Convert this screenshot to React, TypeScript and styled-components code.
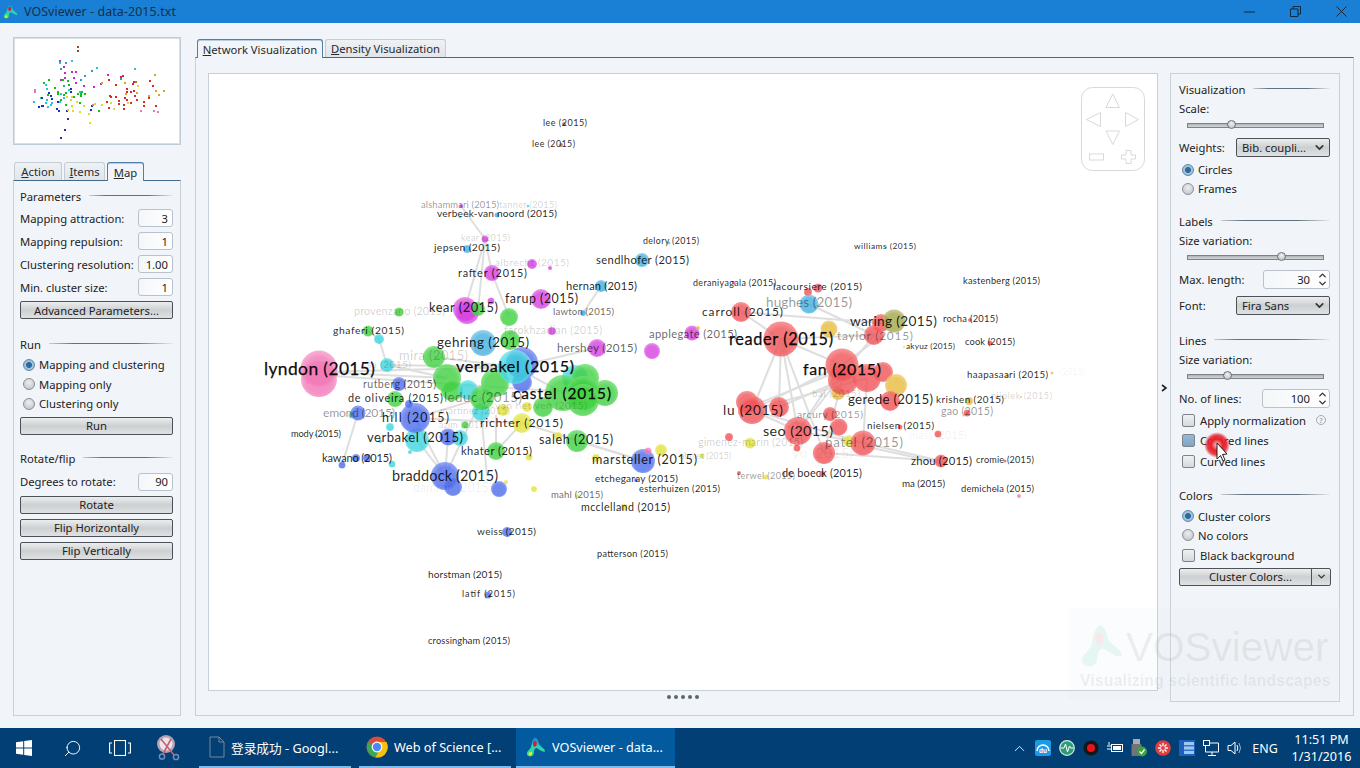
import React from "react";
import styled, { createGlobalStyle } from "styled-components";
import { ChevronDown, ChevronUp, Search } from "lucide-react";

const Global = createGlobalStyle`
  html, body { margin: 0; padding: 0; height: 100%; overflow: hidden; }
  #root { height: 100%; }
  * { box-sizing: border-box; }
`;

const UI_FONT = `"Noto Sans", "Noto Sans CJK SC", "Liberation Sans", sans-serif`;

/* ---------- data ---------- */
type Cluster = "red" | "green" | "blue" | "yellow" | "purple" | "cyan" | "sky" | "orange" | "pink" | "olive" | "brown";

const SHADES: Record<Cluster, [string, string, string]> = {
  red: ["#ef5256", "#f68a8c", "#d92a2a"],
  green: ["#3fd03f", "#7fe27f", "#12bf12"],
  blue: ["#4d6cec", "#8ba0f2", "#1c30bd"],
  yellow: ["#e2e23e", "#eeee90", "#dcdc28"],
  purple: ["#d640e0", "#e88cee", "#c928c9"],
  cyan: ["#3dd4dc", "#8ce8ec", "#22c8d8"],
  sky: ["#44aee0", "#8cd0ee", "#22a0d0"],
  orange: ["#e6bb3e", "#f0d488", "#d8a828"],
  pink: ["#f276b6", "#f8aad2", "#e878b0"],
  olive: ["#a2a648", "#c4c68c", "#908830"],
  brown: ["#c06a50", "#d09880", "#8a5030"],
};

const NODES: [number, number, number, Cluster][] = [
  [319, 379, 18, "pink"], [319, 369, 18.5, "pink"],
  [465, 309, 12, "purple"], [467, 312, 12, "purple"], [478, 309, 7, "green"], [491, 301, 3.5, "purple"], [492, 273, 8, "purple"],
  [541, 299, 10, "purple"], [532, 264, 5, "purple"], [550, 268, 2, "purple"], [485, 239, 3.5, "purple"], [461, 206, 2, "purple"],
  [552, 331, 4, "purple"], [597, 348, 9, "purple"], [652, 351, 8, "purple"], [692, 333, 7.5, "purple"], [698, 328, 2, "orange"],
  [467, 249, 4, "sky"], [528, 206, 1.5, "cyan"], [497, 215, 2.5, "sky"], [460, 217, 1.5, "cyan"], [642, 260, 7, "sky"], [601, 286, 6, "sky"],
  [583, 313, 3, "sky"], [483, 343, 13, "sky"],
  [510, 340, 10, "green"], [509, 317, 9, "green"], [434, 357, 11, "green"], [399, 312, 4.5, "green"], [368, 331, 5.5, "green"],
  [395, 399, 8, "green"], [447, 378, 14, "green"], [452, 390, 11, "green"], [495, 383, 14, "green"],
  [522, 382, 10, "blue"], [522, 363, 16, "blue"], [515, 367, 17, "cyan"],
  [379, 339, 5, "cyan"], [387, 365, 7, "cyan"], [352, 415, 3.5, "cyan"], [390, 427, 4, "cyan"], [468, 390, 10, "cyan"], [481, 412, 9, "cyan"],
  [482, 398, 12, "green"], [417, 440, 12, "cyan"], [460, 438, 8, "cyan"], [410, 452, 2, "cyan"], [380, 441, 2, "cyan"], [392, 464, 3.5, "cyan"], [316, 435, 1.5, "cyan"],
  [575, 378, 13, "cyan"], [585, 378, 14, "green"], [605, 393, 13, "green"], [563, 393, 18, "green"], [583, 393, 17, "green"], [583, 400, 16, "green"], [543, 407, 10, "green"],
  [577, 441, 11, "green"], [496, 451, 9, "green"], [465, 425, 3.5, "green"],
  [399, 384, 7, "blue"], [358, 413, 7.5, "blue"], [415, 418, 15, "blue"], [409, 404, 4, "blue"], [448, 437, 8.5, "blue"],
  [356, 458, 4, "blue"], [367, 458, 4, "blue"], [342, 465, 3.5, "blue"], [453, 487, 9, "blue"], [445, 476, 14, "blue"], [499, 489, 8, "blue"],
  [507, 532, 5, "blue"], [488, 595, 3.5, "blue"], [643, 461, 12, "blue"], [636, 480, 2, "blue"], [468, 642, 1, "blue"],
  [564, 124, 2, "brown"], [561, 145, 2, "brown"],
  [522, 423, 10, "yellow"], [503, 410, 6, "yellow"], [527, 407, 5, "yellow"], [558, 436, 4, "yellow"], [529, 457, 3.5, "yellow"], [596, 458, 4, "yellow"],
  [506, 482, 2, "yellow"], [534, 489, 3, "yellow"], [577, 496, 2, "yellow"], [624, 507, 3.5, "yellow"], [632, 555, 1, "yellow"],
  [661, 450, 6, "yellow"], [750, 443, 5.5, "yellow"], [702, 456, 2.5, "yellow"], [766, 477, 2.5, "yellow"], [849, 441, 6, "yellow"],
  [781, 339, 17.5, "red"], [741, 312, 10, "red"], [818, 288, 4.5, "red"], [808, 292, 4, "red"], [809, 304, 9.5, "sky"], [829, 329, 8.5, "orange"],
  [881, 323, 9, "red"], [874, 335, 10, "red"], [894, 321, 11.5, "olive"], [838, 393, 7, "orange"],
  [883, 372, 10, "red"], [867, 378, 14, "red"], [843, 380, 15, "red"], [842, 365, 16.5, "red"], [896, 385, 11, "orange"],
  [890, 401, 10, "red"], [969, 401, 4, "orange"], [967, 413, 3.5, "red"], [747, 402, 11, "red"], [752, 410, 14, "red"], [779, 407, 10, "red"],
  [798, 431, 14, "red"], [839, 427, 8.5, "red"], [830, 414, 7, "red"], [863, 443, 12.5, "red"], [824, 453, 11, "red"], [797, 448, 3.5, "red"],
  [729, 437, 4, "red"], [900, 427, 2.5, "red"], [938, 434, 3.5, "red"], [941, 461, 6.5, "red"], [822, 474, 3, "red"], [739, 473, 2, "red"],
  [970, 320, 2, "red"], [990, 343, 2.5, "red"], [1005, 461, 1.5, "red"], [923, 485, 1, "pink"], [997, 490, 1, "pink"], [1019, 496, 2, "pink"],
  [648, 451, 3.5, "pink"], [1007, 376, 2, "orange"], [1052, 373, 1.5, "orange"], [1021, 397, 1, "orange"], [904, 347, 1, "yellow"],
  [886, 247, 1, "cyan"], [1000, 281, 1, "orange"], [669, 243, 1.5, "cyan"], [734, 283, 1.5, "purple"], [680, 489, 1, "green"],
];

const EDGES: [number, number, number, number][] = [
  [319, 372, 447, 378], [319, 372, 515, 367], [319, 375, 583, 393], [379, 339, 387, 365], [368, 331, 379, 339],
  [387, 365, 515, 367], [387, 365, 447, 378], [434, 357, 515, 367], [485, 239, 465, 309], [485, 239, 478, 310], [485, 239, 492, 273],
  [461, 206, 485, 239], [492, 273, 509, 317], [601, 286, 583, 313], [358, 413, 342, 465], [415, 418, 445, 476], [417, 440, 445, 476],
  [448, 437, 445, 476], [482, 398, 445, 476], [481, 412, 487, 476], [522, 423, 496, 451], [496, 451, 496, 415], [522, 423, 643, 461],
  [577, 441, 643, 461], [415, 418, 522, 423], [415, 418, 482, 398], [597, 348, 515, 367], [515, 367, 563, 393],
  [781, 339, 752, 410], [781, 339, 779, 407], [781, 339, 798, 431], [781, 339, 842, 365], [781, 339, 824, 453], [741, 312, 781, 339],
  [842, 365, 752, 410], [842, 370, 752, 406], [867, 378, 752, 410], [842, 380, 779, 407], [874, 335, 798, 431], [883, 335, 842, 365],
  [809, 304, 874, 335], [741, 312, 881, 323], [863, 443, 941, 461], [863, 446, 941, 463], [824, 453, 941, 461], [798, 431, 863, 443],
  [867, 378, 863, 443], [842, 380, 824, 453], [798, 431, 842, 365], [752, 410, 798, 431], [752, 410, 863, 443], [781, 339, 874, 335],
];

/* text, left, right, centre y, tone */
const LABELS: [string, number, number, number, number][] = [
  ["(2015)", 1060, 1085, 372, 4], ["mass (2015)", 909, 967, 435, 4], ["gimenez-marin (2015)", 698, 803, 442, 3], ["yu (2015)", 792, 853, 453, 4],
  ["ahmet (2015)", 680, 731, 456, 3], ["nijolek (2015)", 991, 1052, 396, 3], ["bai (2015)", 812, 860, 394, 3], ["damron (2015)", 413, 492, 488, 4],
  ["wyll (2015)", 567, 607, 457, 4], ["albrecht (2015)", 495, 569, 263, 3], ["farokhzadian (2015)", 504, 602, 331, 3], ["provenzano (2015)", 354, 445, 311, 3],
  ["tanner (2015)", 499, 557, 205, 3], ["kear (2015)", 461, 510, 238, 3], ["sa (2015)", 367, 411, 365, 3], ["mira (2015)", 399, 468, 356, 3],
  ["martinez (2015)", 440, 510, 411, 3], ["van het ven (2015)", 495, 587, 406, 3], ["azim (2015)", 439, 487, 425, 3], ["emond (2015)", 323, 395, 413, 2],
  ["hughes (2015)", 766, 852, 303, 2], ["leduc (2015)", 444, 522, 398, 2], ["alshammari (2015)", 421, 499, 205, 2], ["lawton (2015)", 553, 614, 312, 1],
  ["hershey (2015)", 557, 637, 348, 1], ["rutberg (2015)", 363, 436, 385, 1], ["applegate (2015)", 649, 737, 334, 1], ["taylor (2015)", 837, 913, 336, 2],
  ["gao (2015)", 941, 993, 412, 2], ["arcury (2015)", 797, 863, 415, 2], ["patel (2015)", 825, 903, 443, 2], ["terwel (2015)", 737, 795, 476, 2], ["mahl (2015)", 551, 603, 495, 1],
  ["lee (2015)", 543, 587, 123, 0], ["lee (2015)", 532, 575, 144, 0], ["verbeek-van noord (2015)", 437, 557, 214, 0], ["jepsen (2015)", 434, 500, 248, 0],
  ["rafter (2015)", 458, 527, 273, 0], ["sendlhofer (2015)", 596, 689, 260, 0], ["delory (2015)", 643, 699, 241, 0], ["hernan (2015)", 566, 637, 286, 0],
  ["farup (2015)", 505, 578, 299, 0], ["kear (2015)", 429, 498, 308, 0], ["ghaferi (2015)", 333, 404, 331, 0], ["gehring (2015)", 437, 529, 343, 0],
  ["lyndon (2015)", 264, 375, 369, 5], ["verbakel (2015)", 456, 574, 366, 5], ["castel (2015)", 513, 611, 394, 5], ["de oliveira (2015)", 348, 443, 398, 0],
  ["hill (2015)", 382, 449, 418, 0], ["richter (2015)", 480, 563, 423, 0], ["mody (2015)", 291, 341, 434, 0], ["verbakel (2015)", 367, 463, 438, 0],
  ["saleh (2015)", 539, 613, 440, 0], ["khater (2015)", 461, 532, 451, 0], ["kawano (2015)", 322, 392, 458, 0], ["braddock (2015)", 392, 498, 476, 0],
  ["marsteller (2015)", 592, 697, 460, 0], ["etchegaray (2015)", 595, 678, 479, 0], ["esterhuizen (2015)", 639, 720, 489, 0], ["mcclelland (2015)", 581, 670, 507, 0],
  ["weiss (2015)", 477, 536, 532, 0], ["patterson (2015)", 597, 668, 554, 0], ["horstman (2015)", 428, 502, 575, 0], ["latif (2015)", 462, 515, 594, 0],
  ["crossingham (2015)", 428, 510, 641, 0], ["williams (2015)", 854, 916, 246, 0], ["deraniyagala (2015)", 693, 776, 283, 0], ["lacoursiere (2015)", 773, 862, 287, 0],
  ["kastenberg (2015)", 963, 1040, 281, 0], ["carroll (2015)", 702, 783, 312, 0], ["waring (2015)", 850, 937, 321, 0], ["rocha (2015)", 943, 998, 319, 0],
  ["reader (2015)", 729, 833, 339, 5], ["cook (2015)", 965, 1015, 342, 0], ["akyuz (2015)", 906, 955, 346, 0], ["fan (2015)", 803, 881, 369, 5],
  ["haapasaari (2015)", 967, 1048, 375, 0], ["krishen (2015)", 936, 1004, 400, 0], ["gerede (2015)", 848, 933, 400, 0], ["lu (2015)", 723, 783, 411, 0],
  ["seo (2015)", 763, 833, 431, 0], ["nielsen (2015)", 867, 934, 426, 0], ["zhou (2015)", 911, 972, 461, 0], ["cromie (2015)", 976, 1034, 460, 0],
  ["de boeck (2015)", 782, 862, 473, 0], ["ma (2015)", 902, 945, 484, 0], ["demichela (2015)", 961, 1034, 489, 0],
];

const TONE_ALPHA = [0.86, 0.62, 0.42, 0.19, 0.07, 0.95];

/* ---------- page frame ---------- */
const Page = styled.div`
  position: relative;
  height: 768px;
  width: 1360px;
  display: flex;
  flex-direction: column;
  background: #f1f5f9;
  color: #222;
  font-family: ${UI_FONT};
  font-size: 11.25px;
  overflow: hidden;
`;
const TitleBar = styled.header`
  height: 23px;
  background: #1a80d6;
  display: flex;
  align-items: center;
  padding-left: 3px;
  color: #14304a;
  font-size: 12.4px;
  flex: none;
`;
const TitleText = styled.span`
  margin-left: 6px;
  letter-spacing: 0.1px;
`;
const WinButtons = styled.div`
  margin-left: auto;
  margin-right: -4px;
  display: flex;
  align-items: center;
`;
const WinButton = styled.span`
  width: 46px;
  height: 23px;
  display: flex;
  align-items: center;
  justify-content: center;
`;
const Main = styled.main`
  flex: 1;
  display: flex;
  gap: 14px;
  padding: 14px 6px 12px 13px;
  min-height: 0;
`;

/* ---------- left column ---------- */
const LeftColumn = styled.aside`
  width: 168px;
  display: flex;
  flex-direction: column;
  flex: none;
`;
const Thumb = styled.div`
  height: 108px;
  background: #fff;
  border: 1px solid #c0ccd6;
  box-shadow: inset 0 0 0 1px #d8e0e6;
  flex: none;
  svg { display: block; }
`;
const TabStrip = styled.div<{ $left: number }>`
  display: flex;
  align-items: flex-end;
  gap: 2px;
  height: 19px;
  padding-left: ${(p) => p.$left}px;
  flex: none;
`;
const TabStripLeft = styled(TabStrip)`
  margin-top: 16px;
`;
const Tab = styled.div<{ $active?: boolean; $w: number }>`
  width: ${(p) => p.$w}px;
  height: ${(p) => (p.$active ? 19 : 18)}px;
  display: flex;
  align-items: center;
  justify-content: center;
  border: 1px solid ${(p) => (p.$active ? "#4f7ea6" : "#c4ccd4")};
  border-bottom: 0;
  border-radius: 3px 3px 0 0;
  background: ${(p) => (p.$active ? "#f1f5f9" : "linear-gradient(#eef2f5, #e1e5e9)")};
  box-shadow: ${(p) => (p.$active ? "inset 0 1px 0 #b4cee4" : "none")};
  margin-bottom: ${(p) => (p.$active ? -1 : 0)}px;
  position: relative;
  z-index: ${(p) => (p.$active ? 1 : 0)};
  color: #252a30;
  u { text-underline-offset: 1px; }
`;
const TabPanel = styled.div`
  flex: 1;
  border: 1px solid #c9d1d8;
  border-top: 1px solid #41698c;
  display: flex;
  flex-direction: column;
  padding: 8px 7px 0 6px;
  min-height: 0;
`;
const SectionHead = styled.div<{ $mt?: number }>`
  display: flex;
  align-items: center;
  gap: 8px;
  height: 14px;
  margin-top: ${(p) => p.$mt ?? 0}px;
  flex: none;
  &::after {
    content: "";
    flex: 1;
    height: 1px;
    margin-top: -2px;
    background: linear-gradient(to right, #c8d0d8, #65717c 20%, #65717c 70%, #e8ecf0);
  }
`;
const FieldRow = styled.div<{ $mt?: number }>`
  display: flex;
  align-items: center;
  justify-content: space-between;
  height: 18px;
  margin-top: ${(p) => p.$mt ?? 5}px;
  flex: none;
`;
const NumberBox = styled.div<{ $w?: number }>`
  width: ${(p) => p.$w ?? 35}px;
  height: 18px;
  border: 1px solid #b9c2ca;
  border-radius: 3px;
  background: linear-gradient(to right, #f4f7f9, #fff);
  display: flex;
  align-items: center;
  justify-content: flex-end;
  padding-right: 4px;
  flex: none;
`;
const PushButton = styled.div<{ $mt?: number }>`
  height: 18px;
  margin-top: ${(p) => p.$mt ?? 5}px;
  border: 1px solid #4d5258;
  border-radius: 2px;
  background: linear-gradient(#eceded, #cdd0d2 50%, #dfe1e3);
  display: flex;
  align-items: center;
  justify-content: center;
  flex: none;
`;
const ChoiceGroup = styled.div<{ $mt?: number }>`
  margin-top: ${(p) => p.$mt ?? 4}px;
  flex: none;
`;
const Choice = styled.div<{ $h?: number }>`
  display: flex;
  align-items: center;
  gap: 4px;
  height: ${(p) => p.$h ?? 19}px;
  padding-left: 3px;
  white-space: nowrap;
`;
const Radio = styled.span<{ $on?: boolean }>`
  width: 12px;
  height: 12px;
  border-radius: 50%;
  flex: none;
  border: 1px solid ${(p) => (p.$on ? "#5f89ab" : "#8b9096")};
  background: ${(p) =>
    p.$on
      ? "radial-gradient(circle, #2d6a9d 0, #2d6a9d 38%, #a9c6dc 46%, #8fb3cf 100%)"
      : "radial-gradient(circle at 50% 35%, #eceeef, #bdc1c4)"};
`;
const CheckBox = styled.span<{ $on?: boolean }>`
  width: 13px;
  height: 13px;
  border-radius: 2px;
  flex: none;
  margin-right: 1px;
  border: 1px solid #7d8389;
  background: ${(p) => (p.$on ? "linear-gradient(#97bad6, #7ea5c6)" : "linear-gradient(#f0f1f2, #d6d8da)")};
`;

/* ---------- centre ---------- */
const CenterColumn = styled.section`
  flex: 1;
  display: flex;
  flex-direction: column;
  min-width: 0;
`;
const CenterTabs = styled(TabStrip)`
  margin-top: 1px;
  height: 19px;
`;
const ViewPanel = styled.div`
  flex: 1;
  border: 1px solid #c9d1d8;
  border-top: 1px solid #41698c;
  padding: 15px 13px 13px 12px;
  display: flex;
  min-height: 0;
`;
const MapColumn = styled.div`
  width: 950px;
  display: flex;
  flex-direction: column;
  flex: none;
`;
const MapCanvas = styled.div`
  position: relative;
  height: 618px;
  background: #fff;
  border: 1px solid #c6ced6;
  flex: none;
  overflow: hidden;
  svg { display: block; }
`;
const NavOverlay = styled.div`
  position: absolute;
  top: 13px;
  right: 12px;
  width: 64px;
  height: 84px;
`;
const Grip = styled.div`
  flex: 1;
  display: flex;
  align-items: center;
  justify-content: center;
  gap: 3px;
`;
const GripDot = styled.span`
  width: 4px;
  height: 4px;
  border-radius: 50%;
  background: #5c6670;
`;
const Collapse = styled.div`
  width: 12px;
  flex: none;
  display: flex;
  align-items: center;
  justify-content: center;
  svg { display: block; }
`;
const RightPanel = styled.div`
  width: 170px;
  flex: none;
  border: 1px solid #c9d1d8;
  padding: 8px 9px 0 8px;
  display: flex;
  flex-direction: column;
`;
const PlainLabel = styled.div<{ $mt?: number }>`
  height: 14px;
  line-height: 14px;
  margin-top: ${(p) => p.$mt ?? 6}px;
  flex: none;
`;
const SliderTrack = styled.div`
  position: relative;
  height: 5px;
  margin: 7px 6px 3px 8px;
  background: linear-gradient(#aeb3b7, #d6d9db);
  border: 1px solid #7c8388;
  flex: none;
`;
const SliderThumb = styled.span<{ $pos: number }>`
  position: absolute;
  top: -4px;
  left: ${(p) => p.$pos}px;
  width: 9px;
  height: 9px;
  border-radius: 50%;
  border: 1px solid #6c7277;
  background: radial-gradient(circle at 50% 35%, #eef0f1, #b9bdc0);
`;
const SelectBox = styled.div<{ $w?: number }>`
  width: ${(p) => p.$w ?? 94}px;
  height: 19px;
  border: 1px solid #4d5258;
  border-radius: 2px;
  background: linear-gradient(#eceded, #cdd0d2 50%, #dfe1e3);
  display: flex;
  align-items: center;
  justify-content: space-between;
  padding: 0 3px 0 5px;
  flex: none;
`;
const FormRow = styled.div<{ $mt?: number }>`
  display: flex;
  align-items: center;
  justify-content: space-between;
  height: 19px;
  margin-top: ${(p) => p.$mt ?? 0}px;
  flex: none;
`;
const SpinBox = styled.div<{ $w: number }>`
  width: ${(p) => p.$w}px;
  height: 19px;
  border: 1px solid #b9c2ca;
  border-radius: 3px;
  background: linear-gradient(to right, #f4f7f9, #fff);
  display: flex;
  align-items: center;
  justify-content: flex-end;
  gap: 7px;
  padding-right: 1px;
  flex: none;
`;
const SpinArrows = styled.span`
  display: flex;
  flex-direction: column;
  width: 11px;
  svg { display: block; margin: -1.5px 0; }
`;
const HelpMark = styled.span`
  width: 10px;
  height: 10px;
  margin-left: 6px;
  border: 1px solid #a5abb0;
  border-radius: 50%;
  font-size: 7.5px;
  line-height: 8px;
  text-align: center;
  color: #888e94;
`;
const SplitButton = styled.div`
  display: flex;
  height: 18px;
  margin-top: 2px;
  margin-right: -1px;
  flex: none;
  border: 1px solid #4d5258;
  border-radius: 2px;
  background: linear-gradient(#eceded, #cdd0d2 50%, #dfe1e3);
`;
const SplitMain = styled.span`
  flex: 1;
  display: flex;
  align-items: center;
  justify-content: center;
  padding-left: 10px;
  border-right: 1px solid #4d5258;
`;
const SplitArrow = styled.span`
  width: 18px;
  display: flex;
  align-items: center;
  justify-content: center;
`;

/* ---------- overlays ---------- */
const Watermark = styled.div`
  position: absolute;
  left: 1068px;
  top: 608px;
  width: 272px;
  height: 92px;
  pointer-events: none;
  background: rgba(225, 232, 238, 0.14);
  font-family: "Liberation Sans", sans-serif;
`;
const WatermarkLogo = styled.svg`
  position: absolute;
  left: 12px;
  top: 15px;
  opacity: 0.12;
`;
const WatermarkName = styled.div`
  position: absolute;
  left: 58px;
  top: 15px;
  font-size: 40.5px;
  line-height: 48px;
  color: rgba(120, 130, 138, 0.13);
`;
const WatermarkTag = styled.div`
  position: absolute;
  left: 12px;
  top: 63px;
  font-size: 15.6px;
  font-weight: 700;
  line-height: 20px;
  color: rgba(120, 130, 138, 0.12);
  letter-spacing: 0.25px;
  white-space: nowrap;
`;
const CursorMark = styled.svg`
  position: absolute;
  left: 1204px;
  top: 432px;
  pointer-events: none;
`;

/* ---------- taskbar ---------- */
const Taskbar = styled.footer`
  height: 40px;
  background: #023f74;
  display: flex;
  flex: none;
  color: #fff;
  font-size: 12.7px;
`;
const TaskSlot = styled.span`
  width: 48px;
  display: flex;
  align-items: center;
  justify-content: center;
  flex: none;
`;
const TaskItem = styled.div<{ $w: number; $ml: number; $pl: number; $active?: boolean }>`
  width: ${(p) => p.$w}px;
  margin-left: ${(p) => p.$ml}px;
  padding-left: ${(p) => p.$pl}px;
  display: flex;
  align-items: center;
  gap: 6px;
  white-space: nowrap;
  flex: none;
  background: ${(p) => (p.$active ? "#035a9e" : "transparent")};
  border-bottom: 2px solid #7fbcee;
`;
const Tray = styled.div`
  margin-left: auto;
  display: flex;
  align-items: center;
`;
const TrayIcon = styled.span`
  width: 24px;
  height: 40px;
  display: flex;
  align-items: center;
  justify-content: center;
`;
const Lang = styled.span`
  width: 36px;
  text-align: center;
  font-size: 12.4px;
`;
const Clock = styled.div`
  width: 77px;
  text-align: center;
  line-height: 17px;
  font-size: 12.6px;
`;

/* ---------- drawings ---------- */
const VosLogo = ({ size = 18 }: { size?: number }) => (
  <svg width={size} height={size} viewBox="0 0 18 18">
    <defs>
      <linearGradient id="vosleg" x1="0" y1="0" x2="0" y2="1">
        <stop offset="0" stopColor="#1e7fd8" />
        <stop offset="0.45" stopColor="#28d0c8" />
        <stop offset="1" stopColor="#3fe05a" />
      </linearGradient>
    </defs>
    <path d="M8 0.5 C11 1 10.6 4.5 12 7 C13.4 9 17.4 10.6 17 13 C15 14 11.6 11 9.5 10 C8 10 7 12 7 15 C6 18 2 18 1 16 C0 13 3.5 11.5 4.5 9 C5.5 6 5.5 2 8 0.5 Z" fill="url(#vosleg)" />
    <path d="M2.2 16 C2.2 14 4 13 5 13.5 C6 14.8 5.2 16.8 3.6 16.8 Z" fill="#e6e83c" />
    <ellipse cx="8" cy="6" rx="1.7" ry="2.6" fill="#d8201c" />
  </svg>
);

const ChromeLogo = () => (
  <svg width="22" height="22" viewBox="0 0 22 22">
    <circle cx="11" cy="11" r="10.5" fill="#e14a3b" />
    <path d="M11 11 L2 6 A10.5 10.5 0 0 0 9.4 21.4 L15 11 Z" fill="#3aa757" />
    <path d="M11 6 H20.4 A10.5 10.5 0 0 1 9.4 21.4 L15 11 Z" fill="#f4c20d" />
    <circle cx="11" cy="11" r="5.4" fill="#fff" />
    <circle cx="11" cy="11" r="4.2" fill="#4a8af4" />
  </svg>
);

const WindowsLogo = () => (
  <svg width="16" height="16" viewBox="0 0 16 16">
    <path d="M0 2.3 L7.2 1.3 V7.5 H0 Z M8.2 1.1 L16 0 V7.5 H8.2 Z M0 8.5 H7.2 V14.7 L0 13.7 Z M8.2 8.5 H16 V16 L8.2 14.9 Z" fill="#fff" />
  </svg>
);

const TaskViewIcon = () => (
  <svg width="22" height="16" viewBox="0 0 22 16" fill="none" stroke="#fff" strokeWidth="1.1">
    <rect x="5.5" y="0.5" width="11" height="15" />
    <path d="M3 3 H0.6 V13 H3 M19 3 H21.4 V13 H19" />
  </svg>
);

const SnipIcon = () => (
  <svg width="24" height="28" viewBox="0 0 24 28">
    <circle cx="10" cy="10" r="9" fill="#b4a4b4" />
    <circle cx="10" cy="10" r="6.5" fill="#ece4ec" />
    <path d="M5 5 L18 21 M15 5 L7 20" stroke="#c8606a" strokeWidth="1.6" />
    <circle cx="20" cy="23" r="2.6" fill="none" stroke="#6f8fb8" strokeWidth="1.5" />
    <circle cx="6" cy="22.5" r="2.6" fill="none" stroke="#6f8fb8" strokeWidth="1.5" />
  </svg>
);

const DocIcon = () => (
  <svg width="16" height="22" viewBox="0 0 16 22" fill="none" stroke="#74879a" strokeWidth="1">
    <path d="M1 1 H10 L15 6 V21 H1 Z M10 1 V6 H15" />
  </svg>
);

const Tray1 = () => (
  <svg width="16" height="16" viewBox="0 0 16 16">
    <rect width="16" height="16" rx="2" fill="#1b9ae6" />
    <path d="M2 11 A6 6 0 0 1 14 11" fill="none" stroke="#fff" strokeWidth="1.6" />
    <text x="8" y="12.5" fontSize="6.5" fill="#fff" textAnchor="middle" fontFamily="Liberation Sans" fontWeight="700">du</text>
  </svg>
);
const Tray2 = () => (
  <svg width="16" height="16" viewBox="0 0 16 16" fill="none">
    <circle cx="8" cy="8" r="7.3" fill="#2f9a76" stroke="#cfeee0" strokeWidth="1.2" />
    <path d="M1.5 8 H5 L6.5 4 L8.5 12 L10.5 6 L11.5 8 H14.5" stroke="#fff" strokeWidth="1" />
  </svg>
);
const Tray3 = () => (
  <svg width="16" height="16" viewBox="0 0 16 16">
    <circle cx="8" cy="8" r="7.6" fill="#161616" />
    <circle cx="8" cy="8" r="4" fill="#e8141c" />
  </svg>
);
const Tray4 = () => (
  <svg width="16" height="14" viewBox="0 0 16 14" fill="none" stroke="#fff" strokeWidth="1">
    <rect x="4.5" y="3.5" width="11" height="7" />
    <rect x="6" y="5" width="8" height="4" fill="#fff" stroke="none" />
    <path d="M0 5 H4 M0 8 H4 M2 1 V4" />
  </svg>
);
const Tray5 = () => (
  <svg width="16" height="18" viewBox="0 0 16 18">
    <rect x="2" y="0" width="7" height="6" fill="#a9adb0" />
    <rect x="0.5" y="5" width="10" height="12" rx="1" fill="#6e7478" />
    <circle cx="11" cy="12.5" r="5" fill="#39a53a" />
    <path d="M8.5 12.5 L10.5 14.5 L13.5 10.5" stroke="#fff" strokeWidth="1.3" fill="none" />
  </svg>
);
const Tray6 = () => (
  <svg width="16" height="16" viewBox="0 0 16 16">
    <circle cx="8" cy="8" r="7.8" fill="#e23e3e" />
    <path d="M8 3 V13 M3 8 H13 M4.5 4.5 L11.5 11.5 M11.5 4.5 L4.5 11.5" stroke="#fff" strokeWidth="1.3" />
    <circle cx="8" cy="8" r="2" fill="#e23e3e" />
  </svg>
);
const Tray7 = () => (
  <svg width="16" height="16" viewBox="0 0 16 16">
    <rect width="16" height="16" fill="#1c5fc0" />
    <rect x="5" y="2" width="10" height="3.2" fill="#9cc8f2" />
    <rect x="5" y="6.4" width="10" height="3.2" fill="#9cc8f2" />
    <rect x="5" y="10.8" width="10" height="3.2" fill="#9cc8f2" />
  </svg>
);
const Tray8 = () => (
  <svg width="16" height="16" viewBox="0 0 16 16" fill="none" stroke="#fff" strokeWidth="1">
    <rect x="0.5" y="0.5" width="6" height="5" />
    <path d="M6.5 3 H15.5 V12 H2.5 V5.5 M9 12 V15 M5 15.5 H13" />
  </svg>
);
const Tray9 = () => (
  <svg width="16" height="16" viewBox="0 0 16 16" fill="none" stroke="#fff" strokeWidth="1">
    <path d="M1 5.5 H4 L8 2 V14 L4 10.5 H1 Z" />
    <path d="M10 5 Q11.5 8 10 11" />
    <path d="M12 3 Q15 8 12 13" stroke="#9fb4c8" />
  </svg>
);

const NavWidget = () => (
  <svg width="64" height="84" viewBox="0 0 64 84" fill="#fff" stroke="#d9d9d9" strokeWidth="1">
    <rect x="0.5" y="0.5" width="63" height="83" rx="11" />
    <path d="M25 20.5 H38.5 L31.75 7 Z" />
    <path d="M19.5 25.5 V39.5 L5.5 32.5 Z" />
    <path d="M44.5 25.5 V39.5 L57.5 32.5 Z" />
    <path d="M25 44 H38.5 L31.75 57.5 Z" />
    <rect x="8.5" y="67" width="14" height="6" />
    <path d="M45 63.5 H50 V68 H54.5 V72 H50 V76.5 H45 V72 H40.5 V68 H45 Z" />
  </svg>
);

const CollapseArrow = () => (
  <svg width="7" height="8" viewBox="0 0 7 8" fill="none" stroke="#222" strokeWidth="1.6">
    <path d="M1 1 L5 4 L1 7" />
  </svg>
);

const ThumbDots = () => (
  <svg width="166" height="106" viewBox="14 38 166 106" shapeRendering="crispEdges">
    {NODES.filter((n) => n[2] >= 1).map(([x, y, , c], i) => (
      <rect key={i} x={Math.round(34 + (x - 319) * 0.176)} y={Math.round(46 + (y - 124) * 0.176)} width="2" height="2" fill={SHADES[c][2]} />
    ))}
  </svg>
);

const NetworkMap = () => (
  <svg width="948" height="616" viewBox="209 74 948 616">
    <defs>
      {(Object.keys(SHADES) as Cluster[]).map((k) => (
        <radialGradient key={k} id={`node-${k}`} cx="0.5" cy="0.55" r="0.6">
          <stop offset="0" stopColor={SHADES[k][0]} />
          <stop offset="0.6" stopColor={SHADES[k][0]} />
          <stop offset="1" stopColor={SHADES[k][1]} />
        </radialGradient>
      ))}
    </defs>
    <g stroke="#d9d9d9" strokeWidth="2" opacity="0.85">
      {EDGES.map(([a, b, c, d], i) => (
        <line key={i} x1={a} y1={b} x2={c} y2={d} />
      ))}
    </g>
    <g>
      {NODES.map(([x, y, r, c], i) => (
        <circle key={i} cx={x} cy={y} r={r} fill={`url(#node-${c})`} opacity={0.8} />
      ))}
    </g>
    <g fontFamily={`"Lato", "Open Sans", sans-serif`} dominantBaseline="central" fill="#000">
      {LABELS.map(([t, a, b, y, tone], i) => {
        const size = (b - a) / (t.length * 0.49);
        return (
          <text
            key={i}
            x={a}
            y={(y - size * 0.06).toFixed(1)}
            fontSize={size.toFixed(1)}
            fillOpacity={TONE_ALPHA[tone]}
            stroke={tone === 5 ? "#000" : "none"}
            strokeWidth={tone === 5 ? 0.25 : 0}
            textLength={b - a}
            lengthAdjust="spacing"
          >
            {t}
          </text>
        );
      })}
    </g>
  </svg>
);

const Arrow = () => <ChevronDown size={13} strokeWidth={3} color="#333" />;
const Spin = () => (
  <SpinArrows>
    <ChevronUp size={11} strokeWidth={3} color="#333" />
    <ChevronDown size={11} strokeWidth={3} color="#333" />
  </SpinArrows>
);

export default function App() {
  return (
    <>
      <Global />
      <Page>
        <TitleBar>
          <VosLogo size={15} />
          <TitleText>VOSviewer - data-2015.txt</TitleText>
          <WinButtons>
            <WinButton>
              <svg width="11" height="2" viewBox="0 0 11 2"><path d="M0 1 H11" stroke="#11283c" /></svg>
            </WinButton>
            <WinButton>
              <svg width="11" height="11" viewBox="0 0 11 11" fill="none" stroke="#11283c"><path d="M0.5 3 H8 V10.5 H0.5 Z M3 3 V0.5 H10.5 V8 H8" /></svg>
            </WinButton>
            <WinButton>
              <svg width="11" height="11" viewBox="0 0 11 11" stroke="#11283c"><path d="M0.5 0.5 L10.5 10.5 M10.5 0.5 L0.5 10.5" /></svg>
            </WinButton>
          </WinButtons>
        </TitleBar>

        <Main>
          <LeftColumn>
            <Thumb><ThumbDots /></Thumb>
            <TabStripLeft $left={1}>
              <Tab $w={48}><span><u>A</u>ction</span></Tab>
              <Tab $w={41}><span><u>I</u>tems</span></Tab>
              <Tab $w={37} $active><span><u>M</u>ap</span></Tab>
            </TabStripLeft>
            <TabPanel>
              <SectionHead>Parameters</SectionHead>
              <FieldRow $mt={6}><span>Mapping attraction:</span><NumberBox>3</NumberBox></FieldRow>
              <FieldRow><span>Mapping repulsion:</span><NumberBox>1</NumberBox></FieldRow>
              <FieldRow><span>Clustering resolution:</span><NumberBox>1.00</NumberBox></FieldRow>
              <FieldRow><span>Min. cluster size:</span><NumberBox>1</NumberBox></FieldRow>
              <PushButton>Advanced Parameters...</PushButton>

              <SectionHead $mt={18}>Run</SectionHead>
              <ChoiceGroup>
                <Choice $h={19.5}><Radio $on />Mapping and clustering</Choice>
                <Choice $h={19.5}><Radio />Mapping only</Choice>
                <Choice $h={19.5}><Radio />Clustering only</Choice>
              </ChoiceGroup>
              <PushButton $mt={3}>Run</PushButton>

              <SectionHead $mt={17}>Rotate/flip</SectionHead>
              <FieldRow $mt={7}><span>Degrees to rotate:</span><NumberBox>90</NumberBox></FieldRow>
              <PushButton>Rotate</PushButton>
              <PushButton>Flip Horizontally</PushButton>
              <PushButton>Flip Vertically</PushButton>
            </TabPanel>
          </LeftColumn>

          <CenterColumn>
            <CenterTabs $left={2}>
              <Tab $w={126} $active><span><u>N</u>etwork Visualization</span></Tab>
              <Tab $w={121}><span><u>D</u>ensity Visualization</span></Tab>
            </CenterTabs>
            <ViewPanel>
              <MapColumn>
                <MapCanvas>
                  <NetworkMap />
                  <NavOverlay><NavWidget /></NavOverlay>
                </MapCanvas>
                <Grip><GripDot /><GripDot /><GripDot /><GripDot /><GripDot /></Grip>
              </MapColumn>
              <Collapse><CollapseArrow /></Collapse>
              <RightPanel>
                <SectionHead>Visualization</SectionHead>
                <PlainLabel>Scale:</PlainLabel>
                <SliderTrack><SliderThumb $pos={39} /></SliderTrack>
                <FormRow $mt={7}><span>Weights:</span><SelectBox>Bib. coupli...<Arrow /></SelectBox></FormRow>
                <ChoiceGroup $mt={3}>
                  <Choice><Radio $on />Circles</Choice>
                  <Choice><Radio />Frames</Choice>
                </ChoiceGroup>

                <SectionHead $mt={16}>Labels</SectionHead>
                <PlainLabel>Size variation:</PlainLabel>
                <SliderTrack><SliderThumb $pos={89} /></SliderTrack>
                <FormRow $mt={7}><span>Max. length:</span><SpinBox $w={67}>30<Spin /></SpinBox></FormRow>
                <FormRow $mt={7}><span>Font:</span><SelectBox>Fira Sans<Arrow /></SelectBox></FormRow>

                <SectionHead $mt={18}>Lines</SectionHead>
                <PlainLabel>Size variation:</PlainLabel>
                <SliderTrack><SliderThumb $pos={35} /></SliderTrack>
                <FormRow $mt={7}><span>No. of lines:</span><SpinBox $w={68}>100<Spin /></SpinBox></FormRow>
                <ChoiceGroup $mt={2}>
                  <Choice $h={20.5}><CheckBox />Apply normalization<HelpMark>?</HelpMark></Choice>
                  <Choice $h={20.5}><CheckBox $on />Colored lines</Choice>
                  <Choice $h={20.5}><CheckBox />Curved lines</Choice>
                </ChoiceGroup>

                <SectionHead $mt={17}>Colors</SectionHead>
                <ChoiceGroup $mt={4}>
                  <Choice><Radio $on />Cluster colors</Choice>
                  <Choice><Radio />No colors</Choice>
                  <Choice $h={21}><CheckBox />Black background</Choice>
                </ChoiceGroup>
                <SplitButton>
                  <SplitMain>Cluster Colors...</SplitMain>
                  <SplitArrow><ChevronDown size={11} strokeWidth={3} color="#333" /></SplitArrow>
                </SplitButton>
              </RightPanel>
            </ViewPanel>
          </CenterColumn>
        </Main>

        <Taskbar>
          <TaskSlot><WindowsLogo /></TaskSlot>
          <TaskSlot><Search size={19} strokeWidth={1.2} color="#fff" style={{ transform: "scaleX(-1)" }} /></TaskSlot>
          <TaskSlot><TaskViewIcon /></TaskSlot>
          <TaskSlot><SnipIcon /></TaskSlot>
          <TaskItem $w={152} $ml={7} $pl={10}><DocIcon />登录成功 - Googl...</TaskItem>
          <TaskItem $w={152} $ml={8} $pl={7}><ChromeLogo />Web of Science [...</TaskItem>
          <TaskItem $w={159} $ml={5} $pl={10} $active><VosLogo size={20} />VOSviewer - data...</TaskItem>
          <Tray>
            <TrayIcon><ChevronUp size={17} strokeWidth={1.2} color="#fff" /></TrayIcon>
            <TrayIcon><Tray1 /></TrayIcon>
            <TrayIcon><Tray2 /></TrayIcon>
            <TrayIcon><Tray3 /></TrayIcon>
            <TrayIcon><Tray4 /></TrayIcon>
            <TrayIcon><Tray5 /></TrayIcon>
            <TrayIcon><Tray6 /></TrayIcon>
            <TrayIcon><Tray7 /></TrayIcon>
            <TrayIcon><Tray8 /></TrayIcon>
            <TrayIcon><Tray9 /></TrayIcon>
            <Lang>ENG</Lang>
            <Clock>11:51 PM<br />1/31/2016</Clock>
          </Tray>
        </Taskbar>

        <Watermark>
          <WatermarkLogo width="44" height="46" viewBox="0 0 18 18"><path d="M8 0.5 C11 1 10.6 4.5 12 7 C13.4 9 17.4 10.6 17 13 C15 14 11.6 11 9.5 10 C8 10 7 12 7 15 C6 18 2 18 1 16 C0 13 3.5 11.5 4.5 9 C5.5 6 5.5 2 8 0.5 Z" fill="#58d8b0" /><ellipse cx="8" cy="6" rx="1.7" ry="2.6" fill="#e06060" /></WatermarkLogo>
          <WatermarkName>VOSviewer</WatermarkName>
          <WatermarkTag>Visualizing scientific landscapes</WatermarkTag>
        </Watermark>

        <CursorMark width="28" height="36" viewBox="0 0 28 36">
          <defs>
            <radialGradient id="cursor-spot">
              <stop offset="0" stopColor="#f4cfcf" />
              <stop offset="0.45" stopColor="#e8202a" />
              <stop offset="0.75" stopColor="#e8202a" stopOpacity="0.85" />
              <stop offset="1" stopColor="#e8202a" stopOpacity="0" />
            </radialGradient>
          </defs>
          <circle cx="13" cy="13" r="13" fill="url(#cursor-spot)" />
          <path d="M13 11 V27 L16.5 23.5 L19 29 L21 28 L18.5 22.5 L23 22 Z" fill="#fff" stroke="#111" strokeWidth="0.9" />
        </CursorMark>
      </Page>
    </>
  );
}
